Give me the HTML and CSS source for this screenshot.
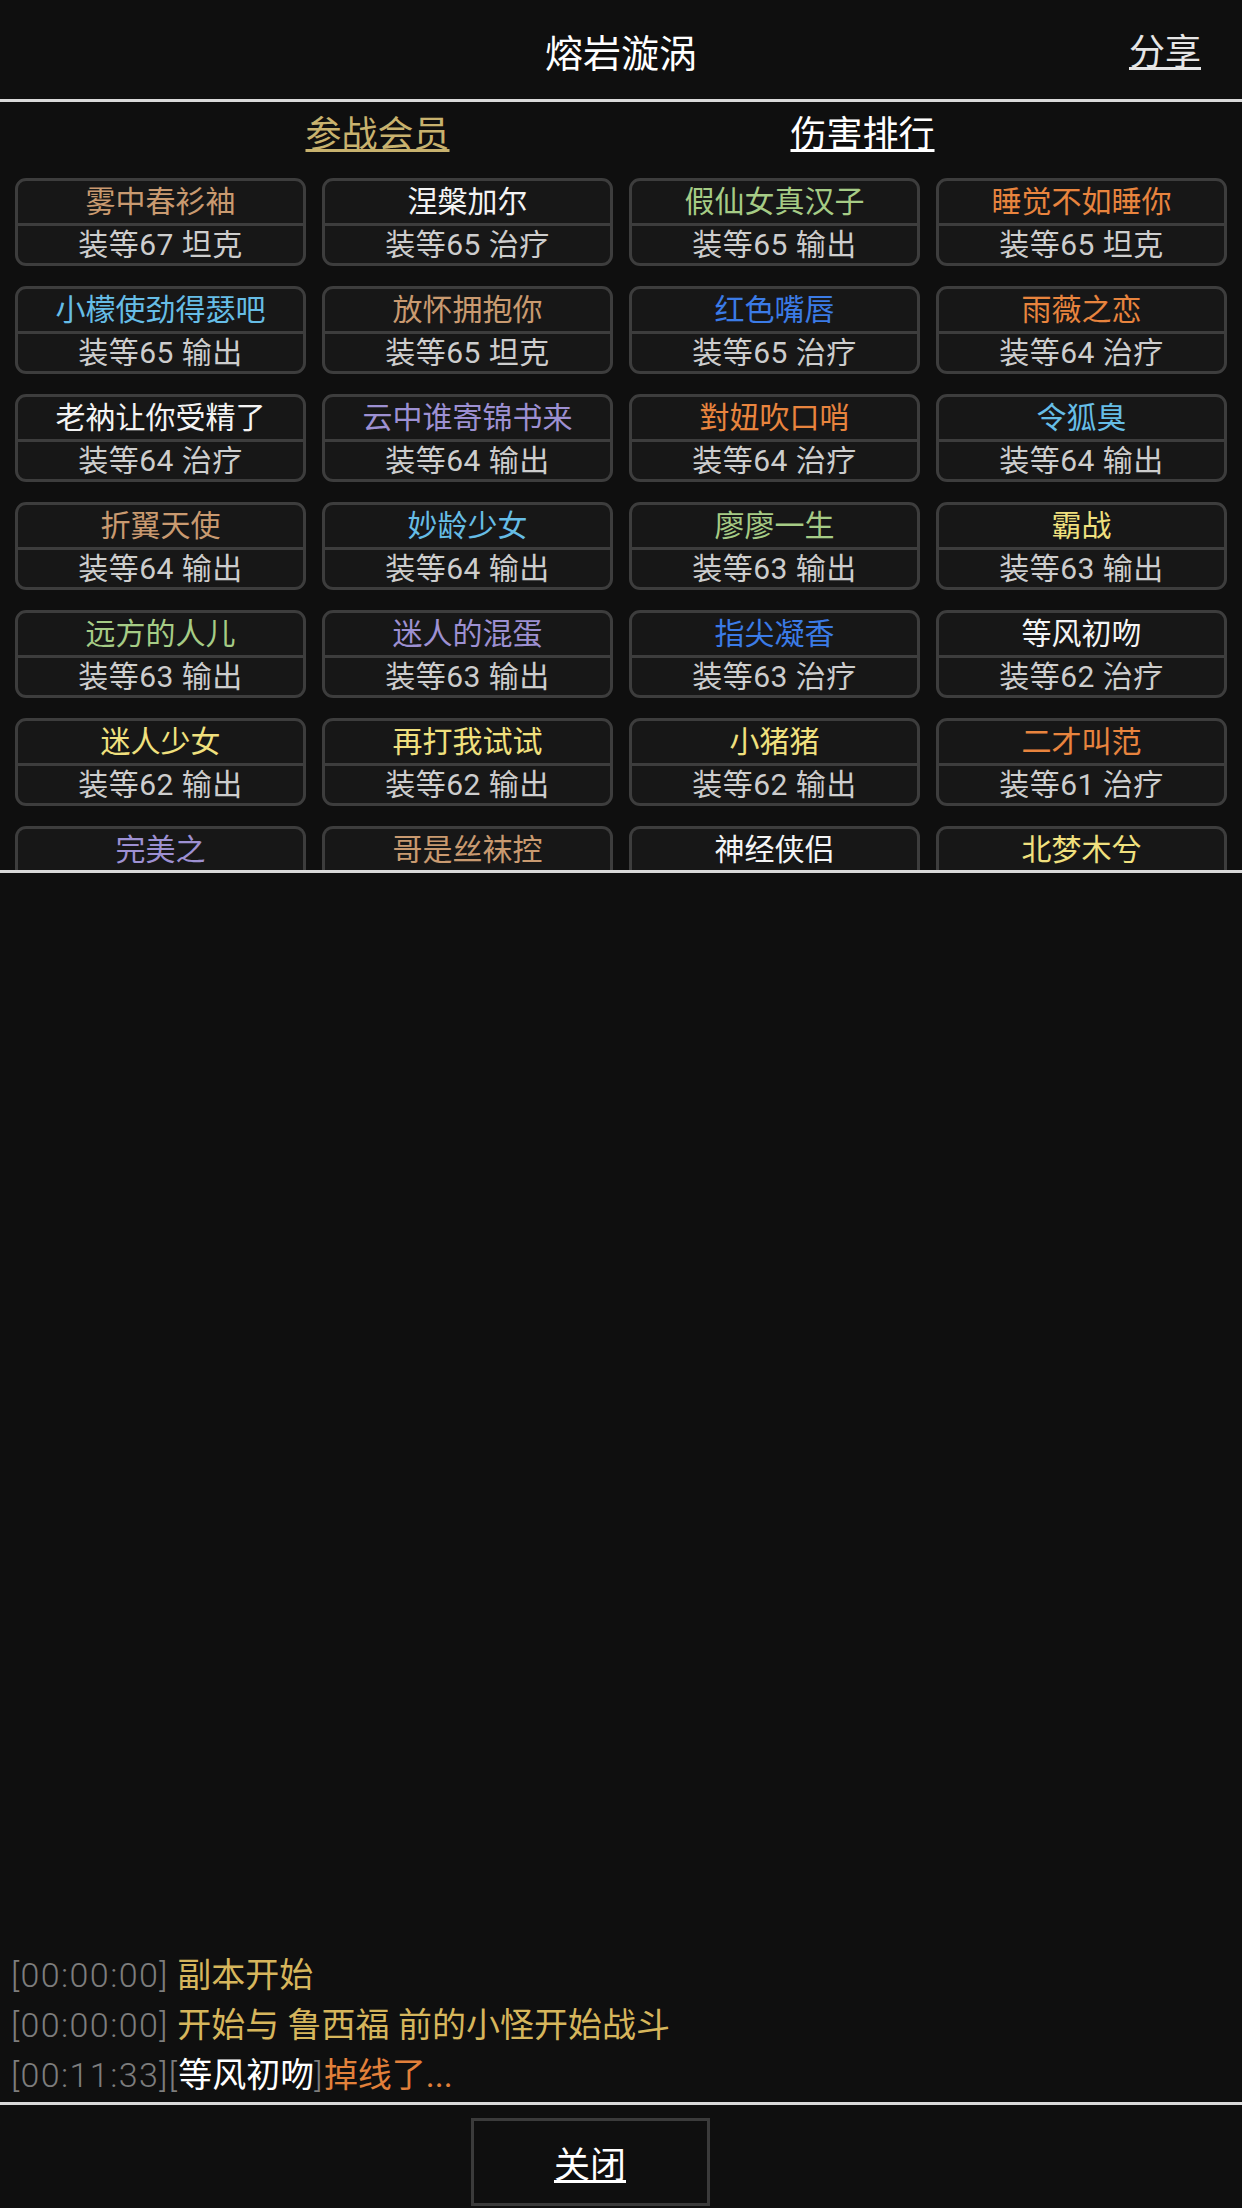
FILE: index.html
```html
<!DOCTYPE html>
<html lang="zh-CN">
<head>
<meta charset="utf-8">
<title>熔岩漩涡</title>
<link rel="stylesheet" href="styles.css">
</head>
<body>
<div class="app">
  <header class="topbar">
    <div class="title">熔岩漩涡</div>
    <a class="share">分享</a>
  </header>

  <section class="members">
    <nav class="tabs">
      <a class="tab tab-active">参战会员</a>
      <a class="tab">伤害排行</a>
    </nav>
    <div class="grid">
      <div class="card"><div class="name c-tan">雾中春衫袖</div><div class="info">装等67 坦克</div></div>
      <div class="card"><div class="name c-white">涅槃加尔</div><div class="info">装等65 治疗</div></div>
      <div class="card"><div class="name c-green">假仙女真汉子</div><div class="info">装等65 输出</div></div>
      <div class="card"><div class="name c-orange">睡觉不如睡你</div><div class="info">装等65 坦克</div></div>

      <div class="card"><div class="name c-sky">小檬使劲得瑟吧</div><div class="info">装等65 输出</div></div>
      <div class="card"><div class="name c-tan">放怀拥抱你</div><div class="info">装等65 坦克</div></div>
      <div class="card"><div class="name c-blue">红色嘴唇</div><div class="info">装等65 治疗</div></div>
      <div class="card"><div class="name c-orange">雨薇之恋</div><div class="info">装等64 治疗</div></div>

      <div class="card"><div class="name c-white">老衲让你受精了</div><div class="info">装等64 治疗</div></div>
      <div class="card"><div class="name c-purple">云中谁寄锦书来</div><div class="info">装等64 输出</div></div>
      <div class="card"><div class="name c-orange">對妞吹口哨</div><div class="info">装等64 治疗</div></div>
      <div class="card"><div class="name c-sky">令狐臭</div><div class="info">装等64 输出</div></div>

      <div class="card"><div class="name c-tan">折翼天使</div><div class="info">装等64 输出</div></div>
      <div class="card"><div class="name c-sky">妙龄少女</div><div class="info">装等64 输出</div></div>
      <div class="card"><div class="name c-green">廖廖一生</div><div class="info">装等63 输出</div></div>
      <div class="card"><div class="name c-yellow">霸战</div><div class="info">装等63 输出</div></div>

      <div class="card"><div class="name c-green">远方的人儿</div><div class="info">装等63 输出</div></div>
      <div class="card"><div class="name c-purple">迷人的混蛋</div><div class="info">装等63 输出</div></div>
      <div class="card"><div class="name c-blue">指尖凝香</div><div class="info">装等63 治疗</div></div>
      <div class="card"><div class="name c-white">等风初吻</div><div class="info">装等62 治疗</div></div>

      <div class="card"><div class="name c-yellow">迷人少女</div><div class="info">装等62 输出</div></div>
      <div class="card"><div class="name c-yellow">再打我试试</div><div class="info">装等62 输出</div></div>
      <div class="card"><div class="name c-yellow">小猪猪</div><div class="info">装等62 输出</div></div>
      <div class="card"><div class="name c-orange">二才叫范</div><div class="info">装等61 治疗</div></div>

      <div class="card card-last"><div class="name c-purple">完美之</div></div>
      <div class="card card-last"><div class="name c-tan">哥是丝袜控</div></div>
      <div class="card card-last"><div class="name c-white">神经侠侣</div></div>
      <div class="card card-last"><div class="name c-yellow">北梦木兮</div></div>
    </div>
  </section>

  <section class="log">
    <p class="line"><span class="ts">[00:00:00]</span> <span class="msg">副本开始</span></p>
    <p class="line"><span class="ts">[00:00:00]</span> <span class="msg">开始与 鲁西福 前的小怪开始战斗</span></p>
    <p class="line"><span class="ts">[00:11:33]</span><span class="ts">[</span><span class="who">等风初吻</span><span class="ts">]</span><span class="warn">掉线了...</span></p>
  </section>

  <footer class="footer">
    <a class="close-btn">关闭</a>
  </footer>
</div>
</body>
</html>
```

FILE: styles.css
```css
html, body {
  margin: 0;
  padding: 0;
  background: #0f0f0f;
}

body {
  font-family: "Roboto", "Noto Sans CJK SC", sans-serif;
  color: #ffffff;
}

.app {
  width: 1242px;
  height: 2208px;
  display: flex;
  flex-direction: column;
  overflow: hidden;
}

/* header */
.topbar {
  height: 99px;
  flex: none;
  display: flex;
  align-items: center;
  justify-content: center;
  position: relative;
  border-bottom: 3px solid #d9d9d9;
}

.title {
  font-size: 38px;
  line-height: 50px;
  color: #ffffff;
  margin-top: 8px;
}

.share {
  position: absolute;
  right: 41px;
  top: 28px;
  font-size: 36px;
  line-height: 50px;
  color: #e6e6e6;
  text-decoration: underline;
  text-decoration-thickness: 3px;
  text-underline-offset: 2px;
}

/* members panel */
.members {
  height: 768px;
  flex: none;
  overflow: hidden;
  border-bottom: 3px solid #d9d9d9;
}

.tabs {
  height: 76px;
  display: flex;
  justify-content: center;
  gap: 343px;
  align-items: flex-start;
}

.tab {
  font-size: 36px;
  line-height: 50px;
  margin-top: 8px;
  margin-left: -2px;
  color: #ffffff;
  text-decoration: underline;
  text-decoration-thickness: 3px;
  text-underline-offset: 2px;
}

.tab-active {
  color: #c8b26e;
}

.grid {
  display: grid;
  grid-template-columns: repeat(4, 1fr);
  column-gap: 16px;
  row-gap: 20px;
  padding: 0 15px;
}

.card {
  box-sizing: border-box;
  height: 88px;
  border: 3px solid #3d3d3d;
  border-radius: 11px;
  background: #171717;
  display: flex;
  flex-direction: column;
  text-align: center;
}

.card-last {
  height: 44px;
  border-bottom: none;
  border-bottom-left-radius: 0;
  border-bottom-right-radius: 0;
}

.card-last .name {
  border-bottom: none;
  height: 41px;
  line-height: 42px;
}

.name {
  height: 42px;
  line-height: 42px;
  font-size: 30px;
  border-bottom: 3px solid #3d3d3d;
  white-space: nowrap;
}

.info {
  height: 37px;
  line-height: 37px;
  font-size: 30px;
  letter-spacing: 0.5px;
  color: #cdcdcd;
  white-space: nowrap;
}

.c-white { color: #f4f4f4; }
.c-tan { color: #c99a70; }
.c-green { color: #a6cc86; }
.c-orange { color: #e8843e; }
.c-sky { color: #66bde6; }
.c-blue { color: #3b7be6; }
.c-purple { color: #9d90d2; }
.c-yellow { color: #f0e07e; }

/* log */
.log {
  flex: 1;
  display: flex;
  flex-direction: column;
  justify-content: flex-end;
  padding: 0 0 2px 11px;
}

.line {
  margin: 0;
  font-size: 34px;
  line-height: 50px;
  white-space: nowrap;
}

.ts {
  color: #7d7d7d;
  font-weight: 300;
  letter-spacing: 1.4px;
}

.msg {
  color: #d6b65c;
}

.who {
  color: #ffffff;
}

.warn {
  color: #e2803a;
}

/* footer */
.footer {
  height: 106px;
  flex: none;
  box-sizing: border-box;
  border-top: 3px solid #d9d9d9;
  display: flex;
  justify-content: center;
  align-items: flex-start;
  padding: 13px 62px 0 0;
}

.close-btn {
  box-sizing: border-box;
  width: 239px;
  height: 88px;
  border: 3px solid #3b3b3b;
  display: flex;
  align-items: center;
  justify-content: center;
  font-size: 36px;
  color: #ffffff;
  text-decoration: underline;
  text-decoration-thickness: 3px;
  text-underline-offset: 2px;
}
```
